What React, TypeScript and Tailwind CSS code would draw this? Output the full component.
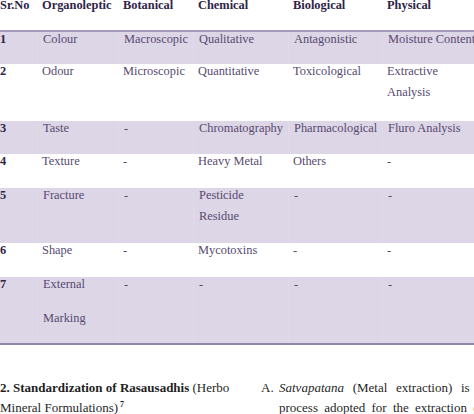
import React from "react";

type Row = { n: string; cells: React.ReactNode[]; h: string; lav: boolean };

const rows: Row[] = [
  { n: "1", cells: ["Colour", "Macroscopic", "Qualitative", "Antagonistic", "Moisture Content"], h: "h-[32px]", lav: true },
  {
    n: "2",
    cells: ["Odour", "Microscopic", "Quantitative", "Toxicological", <>Extractive<br />Analysis</>],
    h: "h-[57px]",
    lav: false,
  },
  { n: "3", cells: ["Taste", "-", "Chromatography", "Pharmacological", "Fluro Analysis"], h: "h-[33px]", lav: true },
  { n: "4", cells: ["Texture", "-", "Heavy Metal", "Others", "-"], h: "h-[34px]", lav: false },
  { n: "5", cells: ["Fracture", "-", <>Pesticide<br />Residue</>, "-", "-"], h: "h-[55px]", lav: true },
  { n: "6", cells: ["Shape", "-", "Mycotoxins", "-", "-"], h: "h-[34px]", lav: false },
  {
    n: "7",
    cells: [
      <>
        <div>External</div>
        <div className="mt-[13px]">Marking</div>
      </>,
      "-",
      "-",
      "-",
      "-",
    ],
    h: "h-[66px]",
    lav: true,
  },
];

const headers = ["Sr.No", "Organoleptic", "Botanical", "Chemical", "Biological", "Physical"];

export default function App() {
  return (
    <div className="w-[474px] h-[414px] overflow-hidden bg-white font-['Liberation_Serif',serif] text-[12.4px] text-[#574a6f]">
      <div className="grid grid-cols-[37px_81px_75px_95px_94px_92px] h-[30px] leading-[10px] font-bold text-[#2f2448] whitespace-nowrap">
        {headers.map((h, i) => (
          <div key={h} className={i === 0 ? "pl-0" : "pl-[5px]"}>
            {h}
          </div>
        ))}
      </div>
      <div className="h-[2px] bg-[#a49bba]" />
      {rows.map((r) => (
        <div
          key={r.n}
          className={`grid grid-cols-[37px_81px_75px_95px_94px_92px] ${r.h} ${r.lav ? "bg-[#ddd6e7]" : "bg-white"} leading-[21px] whitespace-nowrap`}
        >
          <div className="-mt-[3px] font-bold text-[#2f2448]">{r.n}</div>
          {r.cells.map((c, i) => (
            <div
              key={i}
              className={`pl-[5px] ${r.lav ? "border-l border-[#e0d9e9]" : ""}`}
            >
              <div className="-mt-[3px]">{c}</div>
            </div>
          ))}
        </div>
      ))}
      <div className="h-[2px] bg-[#9187aa]" />
      <div className="flex pt-[33px] text-[13px] leading-[20px] text-[#1f1f1f] whitespace-nowrap">
        <div className="w-[236px] shrink-0">
          <div>
            <span className="font-bold">2. Standardization of Rasausadhis</span> (Herbo
          </div>
          <div>
            Mineral Formulations)
            <span className="relative -top-[5px] ml-[2px] text-[8px] font-bold leading-none">7</span>
          </div>
        </div>
        <div className="ml-[25px] flex shrink-0">
          <span className="w-[18px] shrink-0">A.</span>
          <div className="w-[205px] shrink-0">
            <div className="flex justify-between">
              <span className="italic">Satvapatana</span>
              <span>(Metal</span>
              <span>extraction)</span>
              <span>is</span>
              <span>a</span>
            </div>
            <div className="flex justify-between">
              <span>process</span>
              <span>adopted</span>
              <span>for</span>
              <span>the</span>
              <span>extraction</span>
              <span>of</span>
            </div>
          </div>
        </div>
      </div>
    </div>
  );
}
